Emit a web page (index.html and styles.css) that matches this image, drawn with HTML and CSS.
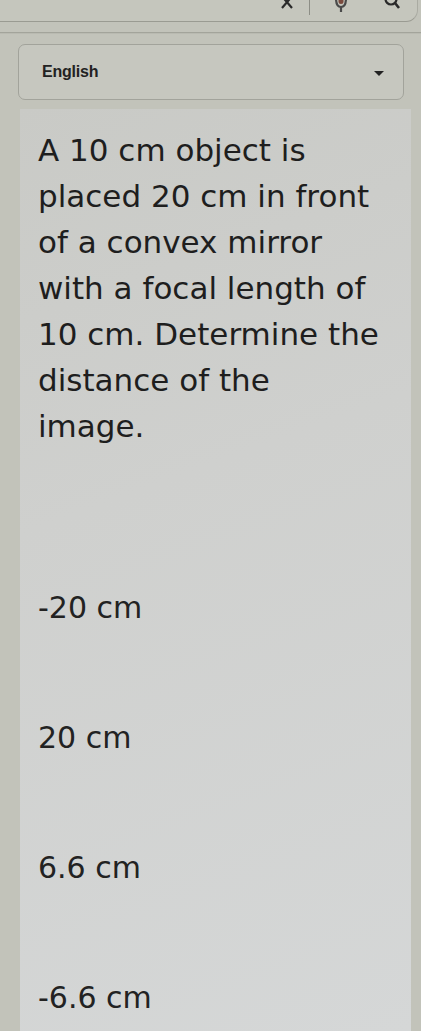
FILE: index.html
```html
<!DOCTYPE html>
<html>
<head>
<meta charset="utf-8">
<link rel="stylesheet" href="styles.css">
</head>
<body>
<div class="page">
  <div class="searchbar">
    <span class="icon-x">
      <svg width="16" height="10" viewBox="0 0 16 10"><path d="M1 -6 L13 8 M15 -6 L3 8" stroke="#2a2a2a" stroke-width="2.2" fill="none"/></svg>
    </span>
    <span class="divider"></span>
    <span class="icon-mic">
      <svg width="16" height="13" viewBox="0 0 16 13"><path d="M3 -2 Q3 7 8 7 Q13 7 13 -2" stroke="#4a4a4a" stroke-width="2.2" fill="none"/><rect x="5.5" y="-6" width="5" height="10" rx="2.5" fill="#7a4a3e"/><path d="M8 7 V12" stroke="#4a4a4a" stroke-width="2.2"/></svg>
    </span>
    <span class="icon-search">
      <svg width="18" height="12" viewBox="0 0 18 12"><circle cx="8" cy="-1" r="5.5" stroke="#2a2a2a" stroke-width="2.2" fill="none"/><path d="M12 3 L16 8" stroke="#2a2a2a" stroke-width="2.6"/></svg>
    </span>
  </div>
  <div class="rule"></div>
  <div class="select">
    <span class="select-label">English</span>
    <svg class="caret" width="12" height="7" viewBox="0 0 12 7"><path d="M1 1 H11 L6 6 Z" fill="#222"/></svg>
  </div>
  <div class="card">
    <p class="question">A 10 cm object is placed 20 cm in front of a convex mirror with a focal length of 10 cm. Determine the distance of the image.</p>
    <div class="options">
      <div class="option">-20 cm</div>
      <div class="option">20 cm</div>
      <div class="option">6.6 cm</div>
      <div class="option">-6.6 cm</div>
    </div>
  </div>
</div>
</body>
</html>
```
FILE: styles.css
```css
* { box-sizing: border-box; }
html, body { margin: 0; padding: 0; }
body {
  width: 421px;
  height: 1031px;
  overflow: hidden;
  background: #c2c3ba;
  font-family: "DejaVu Sans", "Noto Sans", sans-serif;
  color: #222;
}
.page {
  display: flex;
  flex-direction: column;
  height: 1031px;
}
.searchbar {
  height: 22px;
  margin-right: 3px;
  border-bottom: 1px solid #9a9b92;
  border-right: 1px solid #aaaba2;
  border-bottom-right-radius: 12px;
  background: #c5c6bd;
  display: flex;
  align-items: flex-start;
  padding-left: 279px;
}
.icon-x svg, .icon-mic svg, .icon-search svg { display: block; }
.divider { width: 1px; height: 15px; background: #8d8e86; margin-left: 14px; }
.icon-mic { margin-left: 23px; }
.icon-search { margin-left: 34px; }
.rule {
  height: 2px;
  margin-top: 10px;
  border-top: 1px solid #a3a49b;
  background: #b9bab1;
}
.select {
  margin: 10px 17px 0 18px;
  height: 56px;
  border: 1px solid #a2a39b;
  border-radius: 7px;
  background: #c6c7bf;
  display: flex;
  align-items: center;
  justify-content: space-between;
  padding: 0 18px 0 23px;
}
.select-label {
  font-family: "Liberation Sans", Arial, sans-serif;
  font-size: 16px;
  font-weight: 600;
  color: #222;
  letter-spacing: -0.2px;
  margin-top: -1px;
}
.caret { display: block; margin-top: 2px; }
.card {
  flex: 1;
  margin: 9px 10px 0 20px;
  background: linear-gradient(160deg, #c9cac6 0%, #cfd0ce 40%, #d5d7d7 100%);
  padding: 18px 18px 0 18px;
}
.question {
  margin: 0;
  font-size: 31px;
  line-height: 46px;
  color: #1e1e1e;
  width: 344px;
}
.options {
  margin-top: 144px;
  display: flex;
  flex-direction: column;
  gap: 100px;
}
.option {
  font-size: 30px;
  line-height: 30px;
  color: #222;
}
```
